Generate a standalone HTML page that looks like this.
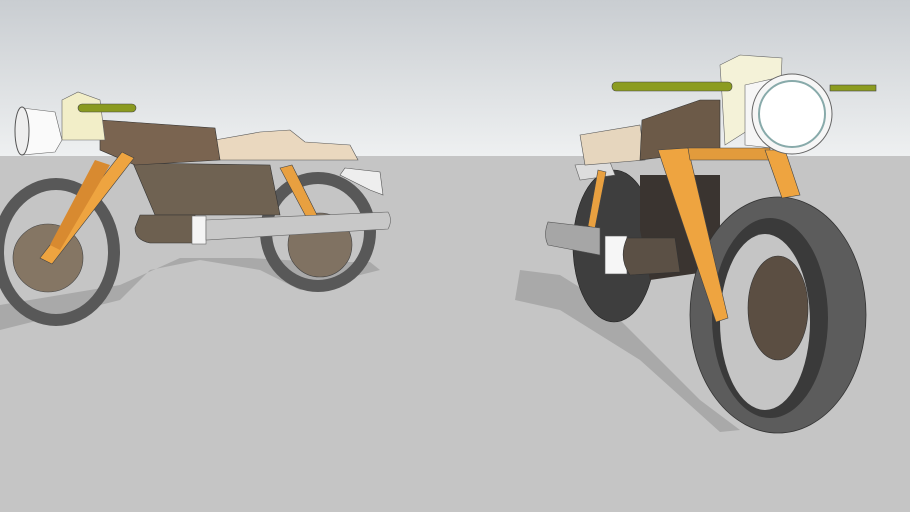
<!DOCTYPE html><html><head><style>html,body{margin:0;padding:0;width:910px;height:512px;overflow:hidden}</style></head><body>
<svg width="910" height="512" viewBox="0 0 910 512" xmlns="http://www.w3.org/2000/svg">
<defs><linearGradient id="sky" x1="0" y1="0" x2="0" y2="1"><stop offset="0" stop-color="#c9cdd1"/><stop offset="1" stop-color="#eef0f1"/></linearGradient></defs>
<rect width="910" height="156" fill="url(#sky)"/>
<rect y="156" width="910" height="356" fill="#c5c5c5"/>
<!-- shadows -->
<path d="M0,330 L120,300 L150,270 L200,260 L260,270 L300,290 L380,270 L370,262 L320,262 L250,258 L180,258 L120,285 L0,305Z" fill="#a9a9a9"/>
<path d="M520,270 L560,275 L600,300 L700,400 L740,430 L720,432 L640,360 L560,310 L515,300Z" fill="#a9a9a9"/>
<!-- LEFT BIKE -->
<ellipse cx="320" cy="245" rx="32" ry="32" fill="#807262" stroke="#444" stroke-width=".6"/>
<ellipse cx="318" cy="232" rx="52" ry="54" fill="none" stroke="#585858" stroke-width="12"/>
<polygon points="280,168 292,165 322,225 312,228" fill="#e8a040" stroke="#444" stroke-width=".6"/>
<path d="M345,168 L380,172 L383,195 L370,190 L340,175Z" fill="#eee" stroke="#555" stroke-width=".6"/>
<polygon points="215,140 260,132 290,130 305,142 350,145 358,160 220,160" fill="#ead8bf" stroke="#555" stroke-width=".6"/>
<polygon points="133,163 270,165 280,215 155,215" fill="#6f6252" stroke="#333" stroke-width=".6"/>
<polygon points="100,120 215,128 220,160 135,165 100,150" fill="#7a6450" stroke="#333" stroke-width=".6"/>
<ellipse cx="48" cy="258" rx="35" ry="34" fill="#857664" stroke="#444" stroke-width=".6"/>
<ellipse cx="56" cy="252" rx="58" ry="68" fill="none" stroke="#585858" stroke-width="12"/>
<polygon points="122,152 134,158 52,264 40,258" fill="#eea440" stroke="#444" stroke-width=".6"/>
<polygon points="95,160 110,165 60,250 50,245" fill="#d88a30"/>
<path d="M140,215 L195,215 L195,243 L150,243 Q135,240 135,228Z" fill="#6d6050" stroke="#333" stroke-width=".6"/>
<rect x="192" y="216" width="14" height="28" fill="#f4f4f4" stroke="#666" stroke-width=".6"/>
<path d="M206,220 L388,212 Q393,220 388,229 L206,240Z" fill="#c8c8c8" stroke="#666" stroke-width=".6"/>
<polygon points="62,100 78,92 100,100 105,140 62,140" fill="#f2eec8" stroke="#666" stroke-width=".6"/>
<polygon points="22,108 55,112 62,140 55,152 22,155" fill="#fafafa" stroke="#666" stroke-width=".6"/>
<ellipse cx="22" cy="131" rx="7" ry="24" fill="#eee" stroke="#555" stroke-width="1"/>
<rect x="78" y="104" width="58" height="8" rx="4" fill="#8a9a20" stroke="#444" stroke-width=".6"/>
<!-- RIGHT BIKE -->
<ellipse cx="614" cy="246" rx="41" ry="76" fill="#3e3e3e" stroke="#222" stroke-width=".6"/>
<polygon points="575,165 610,162 615,175 580,180" fill="#ddd" stroke="#666" stroke-width=".6"/>
<polygon points="640,175 720,175 720,270 650,280 640,230" fill="#3a3430"/>
<polygon points="598,170 606,172 595,228 588,226" fill="#e8a040" stroke="#444" stroke-width=".6"/>
<path d="M600,228 L548,222 Q543,235 548,245 L600,255Z" fill="#a6a6a6" stroke="#555" stroke-width=".6"/>
<rect x="605" y="236" width="22" height="38" fill="#f6f6f6" stroke="#555" stroke-width=".6"/>
<path d="M627,238 L675,238 L680,272 L630,275 Q618,258 627,238Z" fill="#5b5045" stroke="#333" stroke-width=".6"/>
<polygon points="580,135 640,125 645,160 585,165" fill="#e6d6be" stroke="#555" stroke-width=".6"/>
<polygon points="642,120 700,100 720,100 720,150 640,160" fill="#6c5a48" stroke="#333" stroke-width=".6"/>
<ellipse cx="778" cy="315" rx="88" ry="118" fill="#5c5c5c" stroke="#333" stroke-width=".8"/>
<ellipse cx="770" cy="318" rx="58" ry="100" fill="#3a3a3a"/>
<ellipse cx="765" cy="322" rx="45" ry="88" fill="#c5c5c5"/>
<ellipse cx="778" cy="308" rx="30" ry="52" fill="#5b4e42" stroke="#333" stroke-width=".6"/>
<polygon points="658,150 688,148 728,318 716,322" fill="#eea440" stroke="#444" stroke-width=".6"/>
<polygon points="688,148 770,148 770,160 690,160" fill="#e29b3c" stroke="#444" stroke-width=".6"/>
<polygon points="765,150 785,150 800,195 782,198" fill="#eea440" stroke="#444" stroke-width=".6"/>
<polygon points="720,65 740,55 782,58 780,110 725,145 722,95" fill="#f4f2d8" stroke="#666" stroke-width=".6"/>
<rect x="612" y="82" width="120" height="9" rx="4" fill="#8c9c20" stroke="#444" stroke-width=".6"/>
<rect x="830" y="85" width="46" height="6" fill="#8c9c20" stroke="#444" stroke-width=".6"/>
<polygon points="745,85 790,75 790,150 745,145" fill="#f6f6f6" stroke="#666" stroke-width=".6"/>
<circle cx="792" cy="114" r="40" fill="#f6f6f6" stroke="#666" stroke-width="1"/>
<circle cx="792" cy="114" r="33" fill="#ffffff" stroke="#8aa" stroke-width="2"/>
</svg></body></html>
